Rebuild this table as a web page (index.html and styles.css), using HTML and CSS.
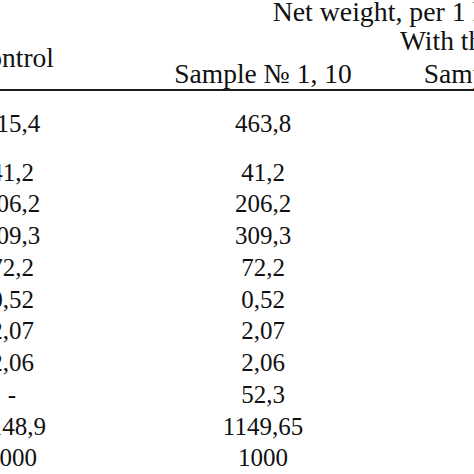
FILE: index.html
```html
<!DOCTYPE html>
<html lang="en">
<head>
<meta charset="utf-8">
<title>Net weight table</title>
<link rel="stylesheet" href="styles.css">
</head>
<body>
<div class="viewport">
  <table class="data">
    <colgroup>
      <col class="c-control">
      <col class="c-s1">
      <col class="c-s2">
    </colgroup>
    <thead>
      <tr class="h1">
        <th></th>
        <th colspan="2" class="span-head">Net weight, per 1 kg</th>
      </tr>
      <tr class="h2">
        <th rowspan="2" class="control rule">Control</th>
        <th></th>
        <th class="with">With the addition of</th>
      </tr>
      <tr class="h3">
        <th class="rule">Sample № 1, 10</th>
        <th class="rule">Sample № 2, 10</th>
      </tr>
    </thead>
    <tbody>
      <tr class="first"><td>415,4</td><td>463,8</td><td>463,8</td></tr>
      <tr class="gap"><td>41,2</td><td>41,2</td><td>41,2</td></tr>
      <tr><td>206,2</td><td>206,2</td><td>206,2</td></tr>
      <tr><td>309,3</td><td>309,3</td><td>309,3</td></tr>
      <tr><td>72,2</td><td>72,2</td><td>72,2</td></tr>
      <tr><td>0,52</td><td>0,52</td><td>0,52</td></tr>
      <tr><td>2,07</td><td>2,07</td><td>2,07</td></tr>
      <tr><td>2,06</td><td>2,06</td><td>2,06</td></tr>
      <tr><td>-</td><td>52,3</td><td>52,3</td></tr>
      <tr><td>1148,9</td><td>1149,65</td><td>1151,42</td></tr>
      <tr><td>1000</td><td>1000</td><td>1000</td></tr>
    </tbody>
  </table>
</div>
</body>
</html>
```

FILE: styles.css
```css
html, body {
  margin: 0;
  padding: 0;
  background: #ffffff;
}

.viewport {
  width: 474px;
  height: 474px;
  overflow: hidden;
  background: #ffffff;
}

.data {
  table-layout: fixed;
  border-collapse: separate;
  border-spacing: 0;
  width: 731px;
  margin-left: -104px;
  font-family: "Liberation Serif", "Times New Roman", serif;
  color: #111111;
}

.c-control { width: 232px; }
.c-s1 { width: 270px; }
.c-s2 { width: 229px; }

.data th {
  font-family: "Liberation Serif", "Times New Roman", serif;
  font-weight: normal;
  font-size: 27.5px;
  line-height: 30px;
  padding: 0;
  text-align: center;
  vertical-align: top;
  white-space: nowrap;
}

.data .h1 th {
  line-height: 24px;
}

.data th.span-head {
  font-size: 27.8px;
  padding-left: 18px;
}

.data .h2 th {
  padding-top: 2px;
}

.data .h3 th {
  padding-top: 3px;
}

.data th.control {
  padding-top: 3px;
  vertical-align: middle;
}

.data th.with {
  text-align: left;
  padding-left: 2px;
}

.data .rule {
  border-bottom: 2px solid #1c1c1c;
}

.data td {
  font-family: "Liberation Serif", "Times New Roman", serif;
  font-size: 25px;
  line-height: 31.75px;
  padding: 0;
  text-align: center;
  white-space: nowrap;
}

.data .first td {
  padding-top: 16.7px;
}

.data .gap td {
  padding-top: 17.25px;
}
```
